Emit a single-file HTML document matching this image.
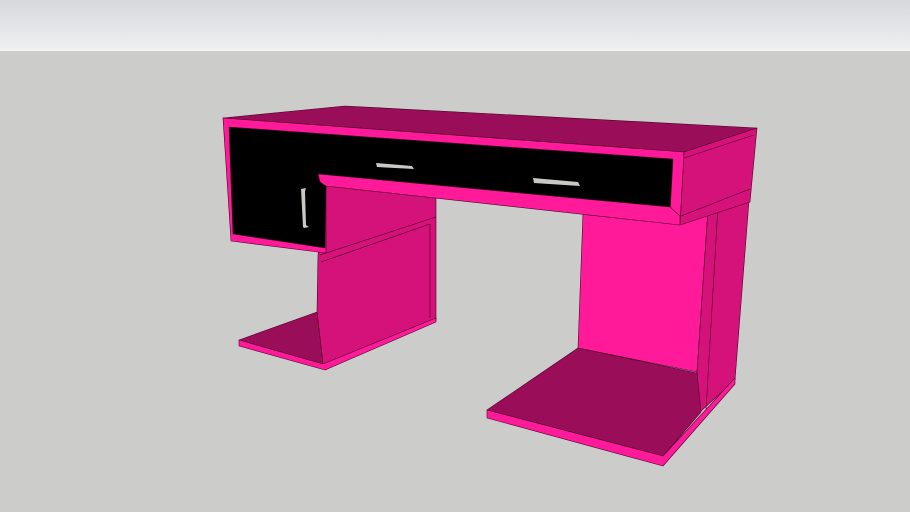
<!DOCTYPE html>
<html><head><style>
html,body{margin:0;padding:0;width:910px;height:512px;overflow:hidden;background:#cccccb;}
</style></head><body>
<svg width="910" height="512" viewBox="0 0 910 512" xmlns="http://www.w3.org/2000/svg">
<defs><linearGradient id="sky" x1="0" y1="0" x2="0" y2="1">
<stop offset="0" stop-color="#d6d9dc"/><stop offset="1" stop-color="#eef0f0"/></linearGradient></defs>
<rect x="0" y="0" width="910" height="50" fill="url(#sky)"/>
<rect x="0" y="49" width="910" height="2" fill="#f4f5f5"/>
<rect x="0" y="51" width="910" height="461" fill="#cccccb"/>
<g stroke="#4a0026" stroke-width="0.6" stroke-linejoin="round">
<!-- left pedestal -->
<polygon points="326,186 436,196 436,320 325,370 323,364 317,312 318,255" fill="#d5127a"/>
<polyline points="320,255 436,217" fill="none"/>
<polyline points="321,262 430,224 430,318" fill="none"/>
<polygon points="239,340 317,312 323,364" fill="#9a0d58"/>
<polygon points="239,340 323,364 436,318 436,322 325,370 239,346" fill="#ff1a9a"/>
<!-- right pedestal -->
<polygon points="583,213 708,210 697,372 578,348" fill="#ff1a9a"/>
<polygon points="708,210 750,188 735,380 700,412 697,372" fill="#d5127a"/>
<polyline points="718,206 706,410" fill="none"/>
<polygon points="487,410 578,348 697,373 701,412 663,456" fill="#9a0d58"/>
<polygon points="487,410 663,456 735,378 735,384 663,466 487,418" fill="#ff1a9a"/>
<!-- top section -->
<polygon points="223,118 345,106 757,128 684,152" fill="#9a0d58"/>
<polygon points="684,152 757,128 750,202 680,225" fill="#d5127a"/>
<polyline points="684,158 754,135" fill="none"/>
<polyline points="681,216 750,189" fill="none"/>
<polygon points="223,118 684,152 680,225 670,215 326,186 326,253 231,241" fill="#ff1a9a"/>
<polygon points="229,127 673,159 670,213 318,177 326,186 325,248 233,234" fill="#000"/>
<polygon points="318,174 670,207 680,216 680,225 326,186 320,182" fill="#ff1a9a"/>
</g>
<!-- handles -->
<path d="M376,163 L412,166 L414,169 L377,167 Z" fill="#c8c8c4"/>
<path d="M533,178 L578,182 L580,186 L534,183 Z" fill="#c8c8c4"/>
<path d="M301,189 L306,188 L305,191 L306,225 L309,227 L304,228 L303,227 Z" fill="#c8c8c4"/>
</svg>
</body></html>
